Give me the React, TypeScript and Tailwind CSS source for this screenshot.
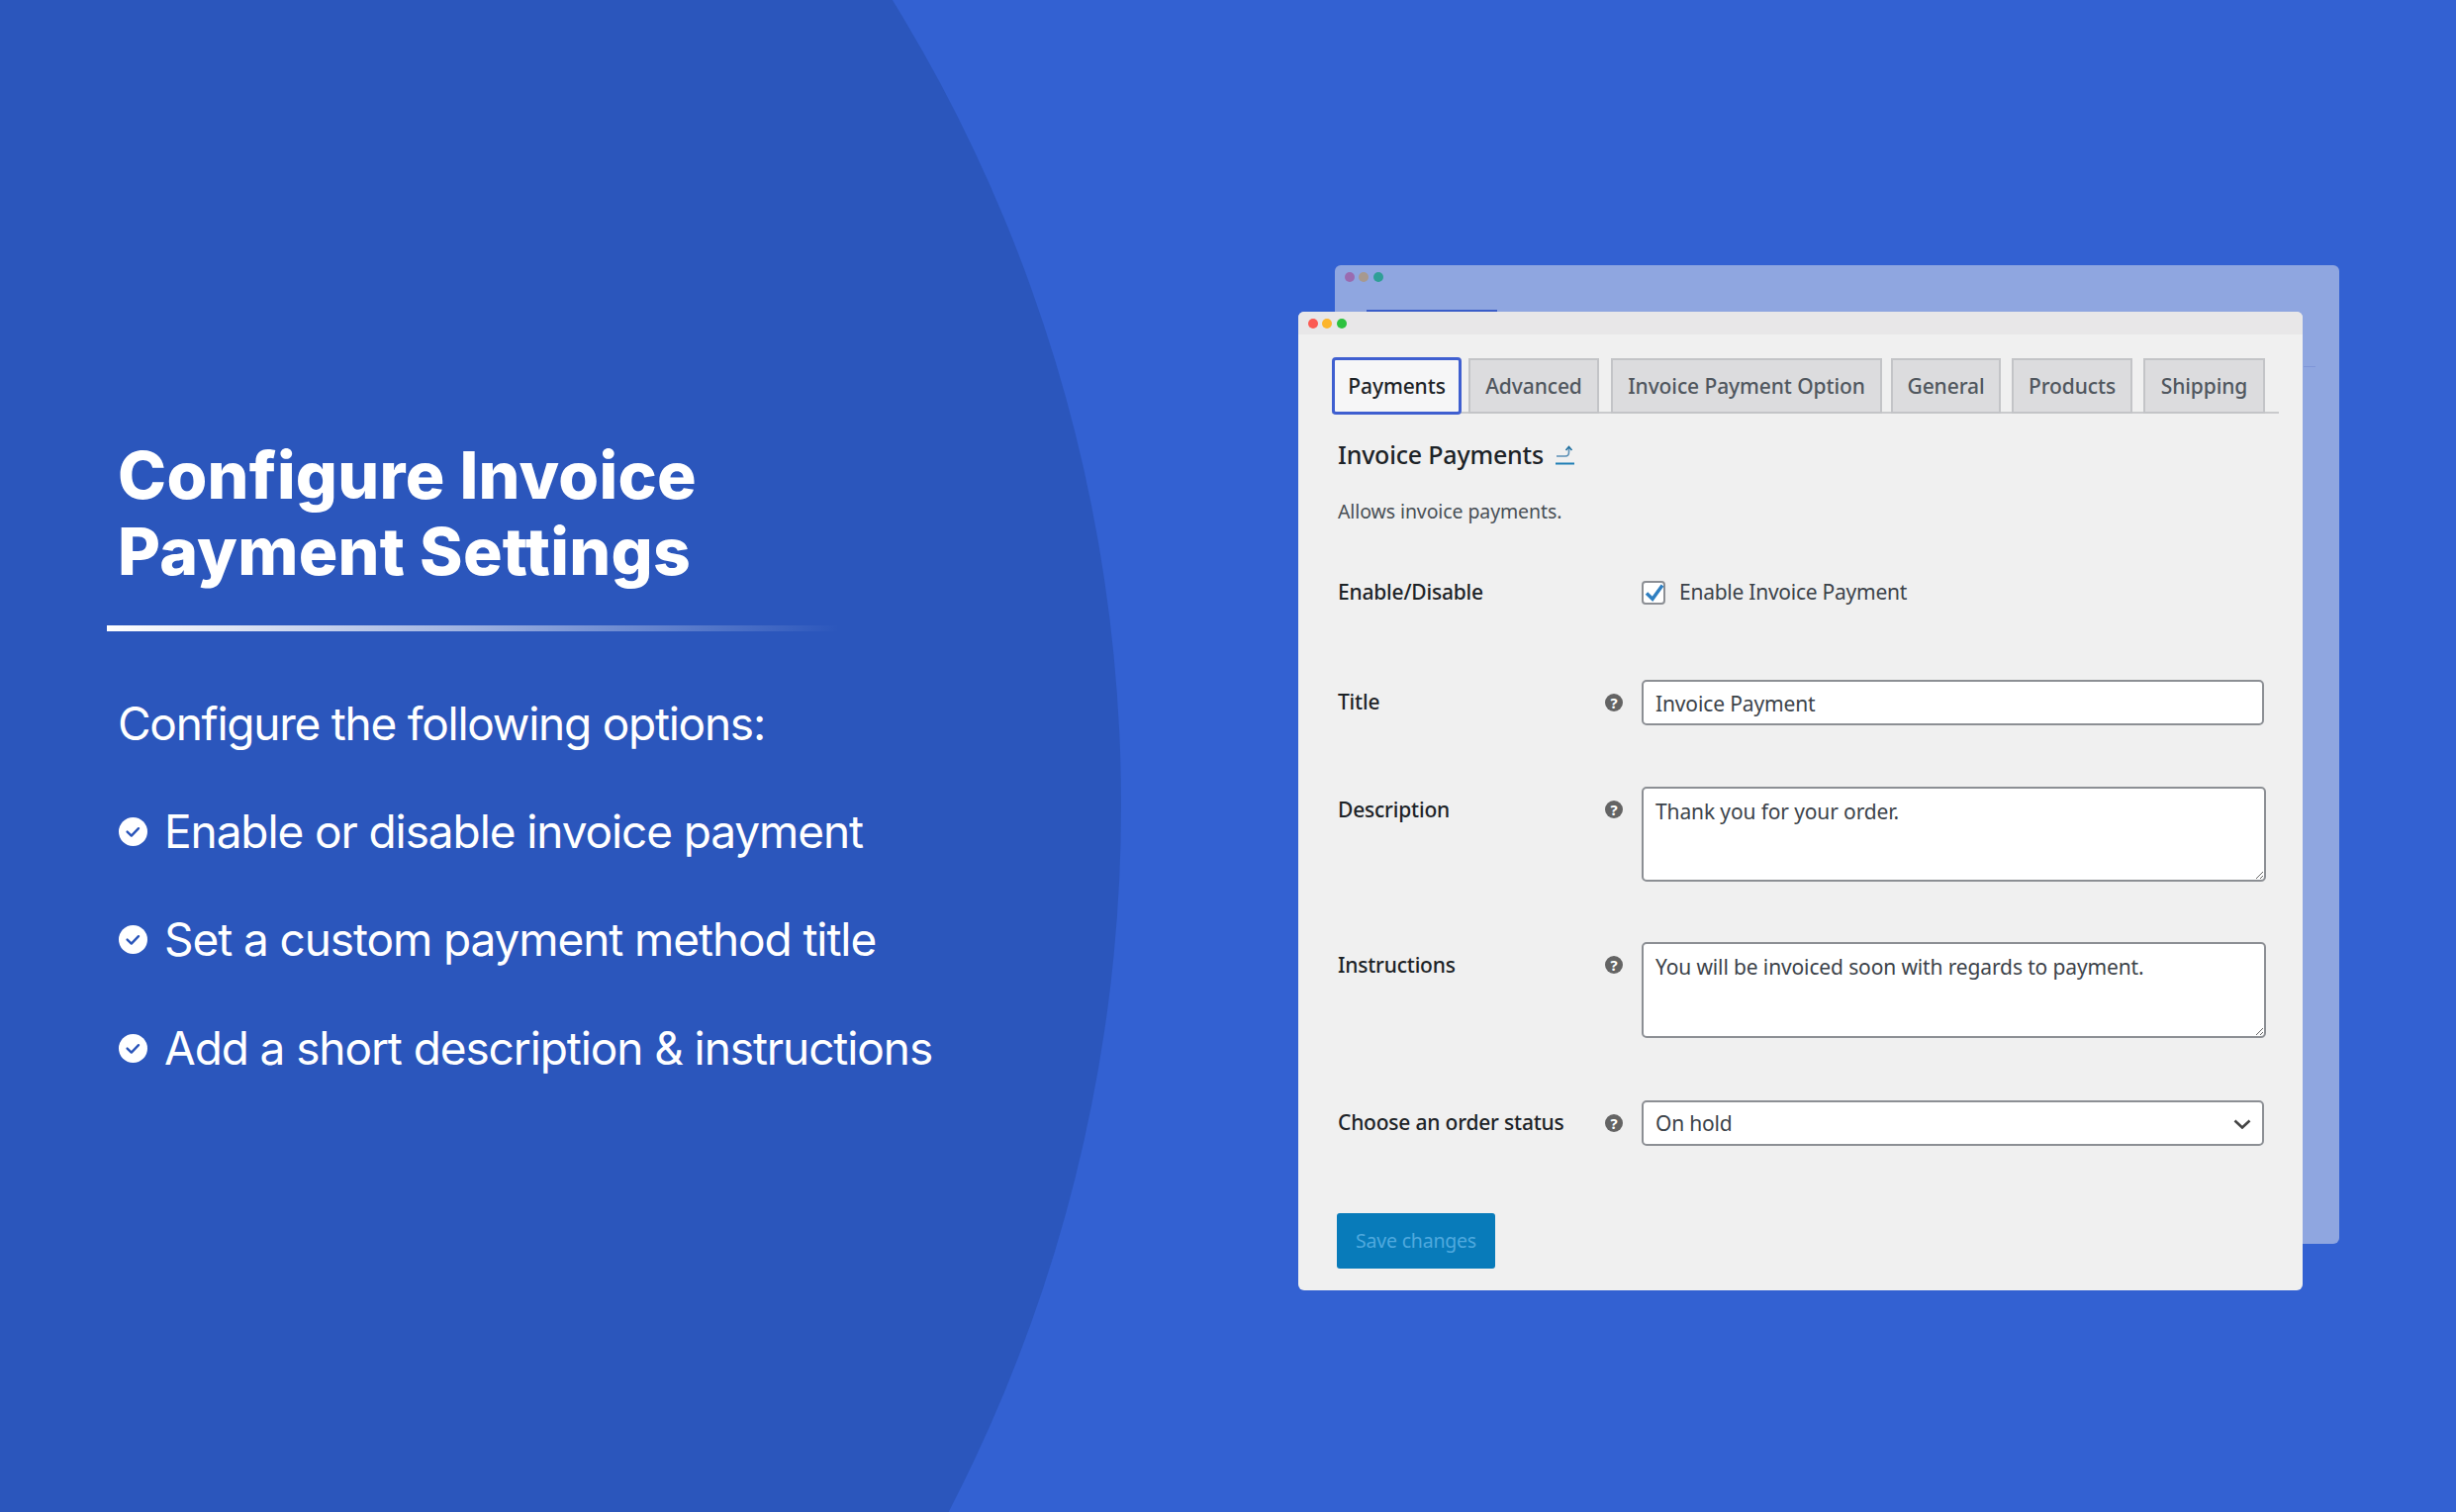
const options = [
  "Enable or disable invoice payment",
  "Set a custom payment method title",
  "Add a short description & instructions",
];

const tabs = [
  { label: "Advanced", width: "w-[132px]", gap: "ml-[7px]" },
  { label: "Invoice Payment Option", width: "w-[274px]", gap: "ml-[12px]" },
  { label: "General", width: "w-[111px]", gap: "ml-[9px]" },
  { label: "Products", width: "w-[122px]", gap: "ml-[11px]" },
  { label: "Shipping", width: "w-[123px]", gap: "ml-[11px]" },
];

function CheckBadge() {
  return (
    <svg viewBox="0 0 29 29" className="w-[29px] h-[29px] shrink-0">
      <circle cx="14.5" cy="14.5" r="14.5" fill="#ffffff" />
      <path d="M8.6 14.6l4.2 4 7.2-7.4" fill="none" stroke="#2a55ba" strokeWidth="2.4" strokeLinecap="round" strokeLinejoin="round" />
    </svg>
  );
}

function HelpTip() {
  return (
    <span className="w-[18px] h-[18px] shrink-0 rounded-full bg-[#646464] text-white text-[15px] leading-[18px] font-bold text-center">
      ?
    </span>
  );
}

function Dots({ muted }: { muted?: boolean }) {
  return (
    <div className="flex gap-[4.4px]">
      <span className={`w-[10px] h-[10px] rounded-full ${muted ? "bg-[#9a6bb0]" : "bg-[#fb5a52]"}`} />
      <span className={`w-[10px] h-[10px] rounded-full ${muted ? "bg-[#a7998f]" : "bg-[#fcb52c]"}`} />
      <span className={`w-[10px] h-[10px] rounded-full ${muted ? "bg-[#2f9f96]" : "bg-[#2dc23f]"}`} />
    </div>
  );
}

export default function App() {
  return (
    <div className="relative flex w-[2482px] h-[1528px] overflow-hidden bg-[#3361d2] font-['Inter',sans-serif]">
      <div className="absolute left-[-1965px] top-[-735px] w-[3098px] h-[3098px] rounded-full bg-[#2b56bc]" />

      <section className="relative w-[1312px] shrink-0 pt-[442px] pl-[108px] text-white">
        <h1 className="pl-[11px] text-[66px] leading-[77px] font-extrabold tracking-[0.3px]">
          Configure Invoice
          <br />
          Payment Settings
        </h1>
        <div className="mt-[36px] w-[740px] h-[6px] bg-gradient-to-r from-white via-[#ffffff88] to-transparent" />
        <p className="mt-[65px] pl-[11px] text-[46px] leading-[56px] font-normal tracking-[-1.25px]">Configure the following options:</p>
        <ul className="mt-[53px] pl-[12px] flex flex-col gap-[53.5px]">
          {options.map((option) => (
            <li key={option} className="flex items-center gap-[17px] h-[56px] text-[46px] font-normal tracking-[-1.1px]">
              <CheckBadge />
              <span>{option}</span>
            </li>
          ))}
        </ul>
      </section>

      <div className="relative mt-[315px] w-[1015px] h-[989px] font-['Noto_Sans',sans-serif]">
        <div className="absolute left-[37px] top-[-47px] w-[1015px] h-[989px] rounded-[6px] bg-[#8fa6e0]">
          <div className="pt-[7px] pl-[10px]">
            <Dots muted />
          </div>
          <div className="absolute left-[32px] top-[45px] w-[132px] h-[2px] bg-[#3a5dc8]" />
          <div className="absolute left-[979px] top-[102px] w-[12px] h-[1px] bg-[#7f96d8]" />
        </div>

        <div className="relative w-[1015px] h-[989px] rounded-[6px] overflow-hidden bg-[#f0f0f0]">
          <div className="h-[23px] pt-[7px] pl-[10px] bg-[#e8e7e8]">
            <Dots />
          </div>

          <div className="mt-[24px] ml-[34px] w-[957px] h-[56px] flex items-end border-b-[2px] border-[#c9cacc] text-[21px]">
            <div className="w-[131px] h-[58px] mb-[-3px] pt-[2px] flex items-center justify-center rounded-[4px] border-[3px] border-[#3f5fd0] bg-[#f6f6f7] text-[#1d2327] font-medium tracking-[-0.1px]">
              Payments
            </div>
            {tabs.map((tab) => (
              <div
                key={tab.label}
                className={`${tab.width} ${tab.gap} h-[56px] mb-[-2px] pt-[2px] flex items-center justify-center border-[2px] border-[#c3c4c7] bg-[#dcdcde] text-[#50575e] font-medium tracking-[-0.1px]`}
              >
                {tab.label}
              </div>
            ))}
          </div>

          <div className="pl-[40px] text-[21px] tracking-[-0.2px] text-[#1d2327]">
            <h2 className="mt-[24px] h-[36px] flex items-center gap-[12px] text-[25px] font-medium">
              Invoice Payments
              <svg viewBox="0 0 20 20" className="w-[20px] h-[20px]">
                <path d="M0 18.5H19" stroke="#1f7fb5" strokeWidth="2.2" fill="none" />
                <path d="M1 11H10Q13.5 11 13.5 7V2" stroke="#5a8fb5" strokeWidth="1.6" fill="none" />
                <path d="M10.5 5L13.5 1.5L16.5 5" stroke="#1f6f9f" strokeWidth="1.6" fill="none" />
              </svg>
            </h2>
            <p className="mt-[24px] h-[30px] leading-[30px] text-[19.5px] tracking-[-0.1px] text-[#484f55]">Allows invoice payments.</p>

            <div className="mt-[52px] h-[30px] flex items-center font-medium">
              <label className="w-[307px]">Enable/Disable</label>
              <span className="flex items-center justify-center w-[24px] h-[24px] rounded-[4px] border-[2px] border-[#8c8f94] bg-white">
                <svg viewBox="0 0 24 24" className="w-[24px] h-[24px] -m-[2px] shrink-0">
                  <path d="M5 12.5l6 5.8L21 4.5" fill="none" stroke="#2f7fc1" strokeWidth="3.4" />
                </svg>
              </span>
              <span className="ml-[14px] font-normal tracking-[-0.25px] text-[#3c434a]">Enable Invoice Payment</span>
            </div>

            <div className="mt-[73px] h-[46px] flex items-center font-medium">
              <label className="w-[270px]">Title</label>
              <HelpTip />
              <input
                readOnly
                defaultValue="Invoice Payment"
                className="ml-[19px] w-[629px] h-[46px] px-[12px] pt-[1px] rounded-[5px] border-[2px] border-[#8c8f94] bg-white font-normal tracking-[-0.13px] text-[#3c434a] outline-none"
              />
            </div>

            <div className="mt-[62px] h-[96px] flex items-start font-medium">
              <label className="w-[270px] mt-[8px] leading-[30px]">Description</label>
              <span className="mt-[14px] flex">
                <HelpTip />
              </span>
              <textarea
                readOnly
                defaultValue="Thank you for your order."
                className="ml-[19px] w-[631px] h-[96px] px-[12px] py-[8px] rounded-[5px] border-[2px] border-[#8c8f94] bg-white font-normal tracking-[-0.13px] text-[#3c434a] outline-none"
              />
            </div>

            <div className="mt-[61px] h-[97px] flex items-start font-medium">
              <label className="w-[270px] mt-[8px] leading-[30px]">Instructions</label>
              <span className="mt-[14px] flex">
                <HelpTip />
              </span>
              <textarea
                readOnly
                defaultValue="You will be invoiced soon with regards to payment."
                className="ml-[19px] w-[631px] h-[97px] px-[12px] py-[8px] rounded-[5px] border-[2px] border-[#8c8f94] bg-white font-normal tracking-[-0.13px] text-[#3c434a] outline-none"
              />
            </div>

            <div className="mt-[63px] h-[46px] flex items-center font-medium">
              <label className="w-[270px]">Choose an order status</label>
              <HelpTip />
              <div className="ml-[19px] w-[629px] h-[46px] pl-[12px] pr-[11px] pt-[1px] flex items-center justify-between rounded-[5px] border-[2px] border-[#8c8f94] bg-white font-normal text-[#3c434a]">
                On hold
                <svg viewBox="0 0 18 10" className="w-[18px] h-[10px]">
                  <path d="M1.5 1.5L9 8.5L16.5 1.5" fill="none" stroke="#444444" strokeWidth="2.6" />
                </svg>
              </div>
            </div>

            <button className="mt-[68px] -ml-[1px] w-[160px] h-[56px] rounded-[3px] bg-[#087bba] text-[#4fa9de] text-[19.5px]">
              Save changes
            </button>
          </div>
        </div>
      </div>
    </div>
  );
}
